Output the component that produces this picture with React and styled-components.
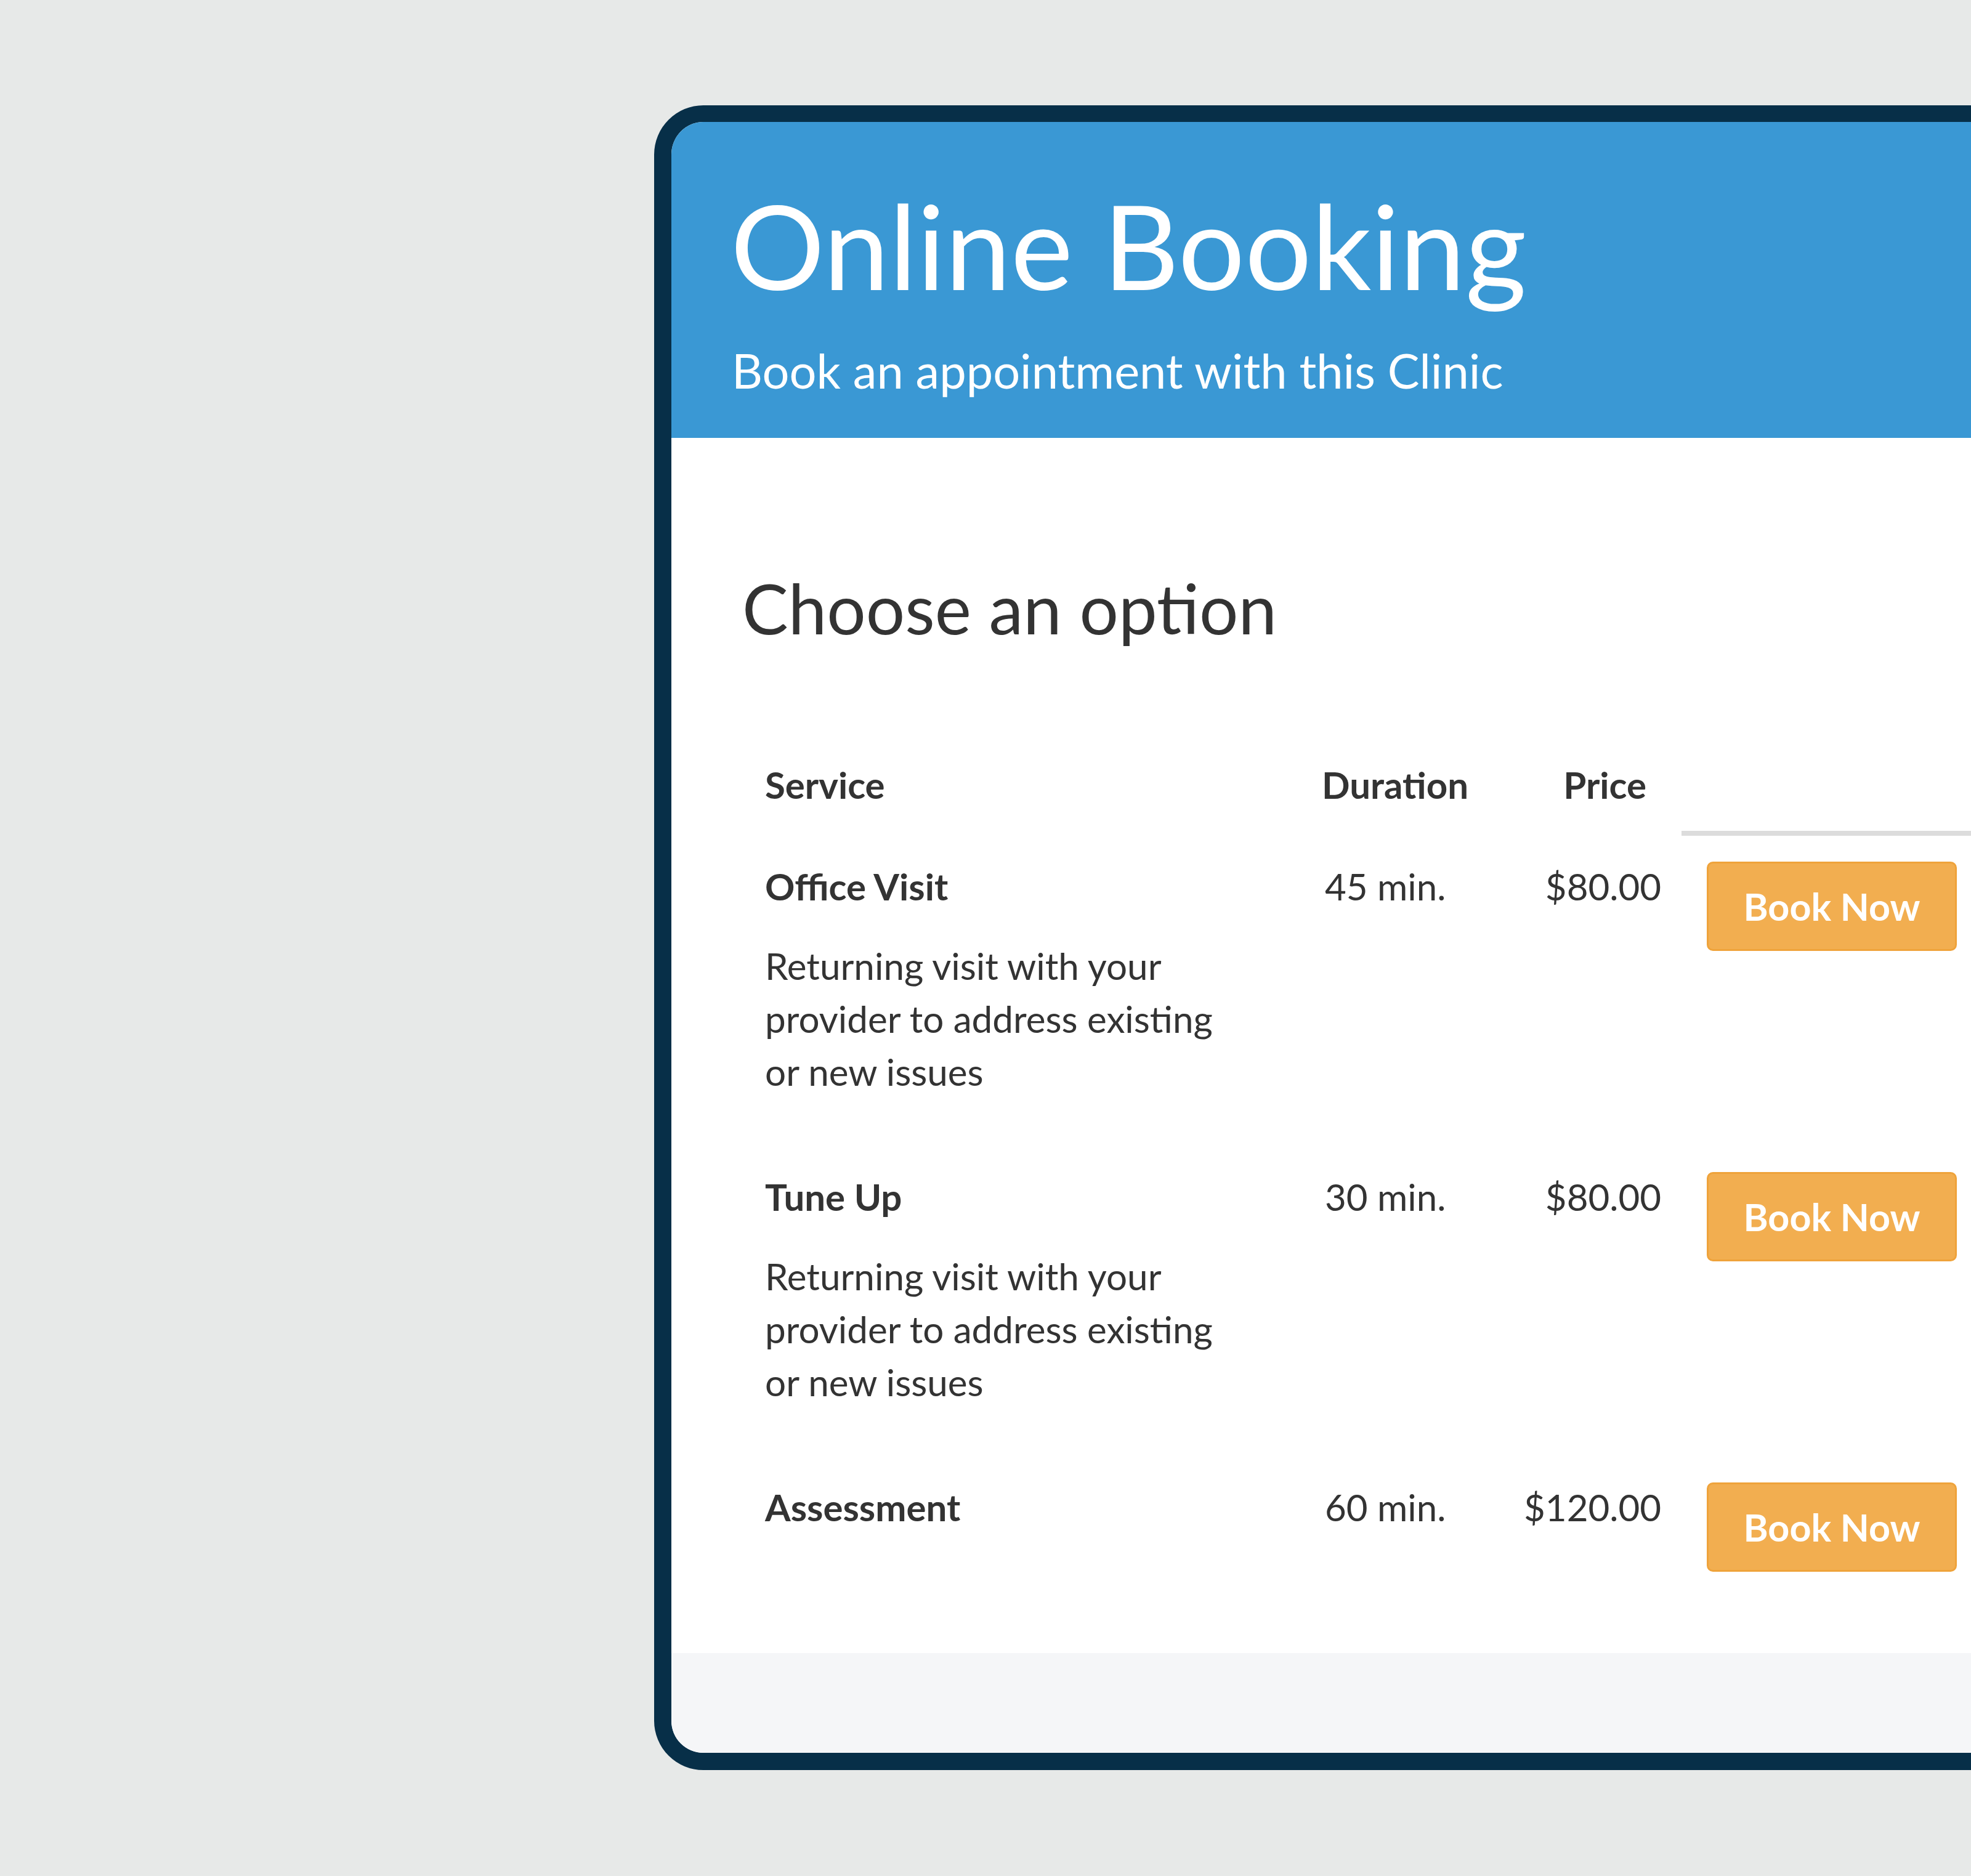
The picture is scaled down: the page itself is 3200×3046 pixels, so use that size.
import styled, { createGlobalStyle } from "styled-components";

const GlobalStyle = createGlobalStyle`
  html, body {
    margin: 0;
    padding: 0;
    background: #e7e9e8;
  }

  body {
    font-family: Lato, "Open Sans", sans-serif;
    color: #333333;
  }
`;

const Pagina = styled.div`
  width: 3200px;
  height: 3046px;
  padding: 171px 0 0 1062px;
  box-sizing: border-box;
  overflow: hidden;
`;

const Aparelho = styled.div`
  width: 2400px;
  border: 28px solid #072f48;
  border-top-width: 27px;
  border-radius: 80px;
  overflow: hidden;
  background: #ffffff;
`;

const Cabecalho = styled.header`
  background: #3a98d4;
  padding: 104px 0 71px 96px;
  color: #ffffff;
`;

const Titulo = styled.h1`
  margin: 0;
  font-size: 191px;
  line-height: 1;
  font-weight: 400;
`;

const Subtitulo = styled.p`
  margin: 69px 0 0 2px;
  font-size: 77.6px;
  line-height: 78px;
  font-weight: 400;
`;

const Corpo = styled.main`
  padding: 220px 0 14px 0;
`;

const TituloSecao = styled.h2`
  margin: 0 0 201px 115px;
  font-size: 112px;
  line-height: 1;
  font-weight: 400;
  color: #333333;
`;

const Tabela = styled.div`
  margin-left: 152px;
  display: flex;
  flex-direction: column;
`;

const Linha = styled.div`
  display: grid;
  grid-template-columns: 904px 325px 259px 1fr;
  padding-bottom: ${(p) => (p.$ultima || p.$cabecalho ? "0" : "120px")};
  margin-bottom: ${(p) => (p.$cabecalho ? "42px" : "0")};
`;

const CelulaCabecalho = styled.div`
  font-size: 60px;
  line-height: 1;
  font-weight: 700;
  padding-bottom: 45px;
  text-align: ${(p) => p.$alinhar || "left"};
  padding-right: ${(p) => p.$recuo || "0"};
  border-bottom: 8px solid ${(p) => (p.$linha ? "#dcdcdc" : "transparent")};
`;

const Celula = styled.div`
  font-size: 60px;
  line-height: 80px;
  text-align: ${(p) => p.$alinhar || "left"};
  padding-left: ${(p) => p.$avanco || "0"};
  padding-right: ${(p) => p.$recuo || "0"};
`;

const NomeServico = styled.div`
  font-size: 60px;
  line-height: 80px;
  font-weight: 700;
`;

const Descricao = styled.p`
  margin: 46px 0 0;
  width: 760px;
  font-size: 60.2px;
  line-height: 86px;
`;

const BotaoReserva = styled.button`
  margin-left: 41px;
  width: 406px;
  height: 145px;
  background: #f2ae50;
  border: 3px solid #efa33b;
  border-radius: 10px;
  color: #ffffff;
  font-family: Lato, "Open Sans", sans-serif;
  font-size: 61px;
  font-weight: 700;
  cursor: pointer;
  padding: 0;
`;

const Espaco = styled.div`
  height: 118px;
`;

const Rodape = styled.footer`
  height: 162px;
  background: #f5f6f8;
`;

const servicos = [
  {
    nome: "Office Visit",
    duracao: "45 min.",
    preco: "$80.00",
    descricao:
      "Returning visit with your provider to address existing or new issues",
  },
  {
    nome: "Tune Up",
    duracao: "30 min.",
    preco: "$80.00",
    descricao:
      "Returning visit with your provider to address existing or new issues",
  },
  { nome: "Assessment", duracao: "60 min.", preco: "$120.00" },
];

export default function App() {
  return (
    <>
      <GlobalStyle />
      <Pagina>
        <Aparelho>
          <Cabecalho>
            <Titulo>Online Booking</Titulo>
            <Subtitulo>Book an appointment with this Clinic</Subtitulo>
          </Cabecalho>
          <Corpo>
            <TituloSecao>Choose an option</TituloSecao>
            <Tabela>
              <Linha $cabecalho>
                <CelulaCabecalho>Service</CelulaCabecalho>
                <CelulaCabecalho>Duration</CelulaCabecalho>
                <CelulaCabecalho $alinhar="right" $recuo="57px">
                  Price
                </CelulaCabecalho>
                <CelulaCabecalho $linha />
              </Linha>
              {servicos.map((s, i) => (
                <Linha key={i} $ultima={i === servicos.length - 1}>
                  <div>
                    <NomeServico>{s.nome}</NomeServico>
                    {s.descricao && <Descricao>{s.descricao}</Descricao>}
                  </div>
                  <Celula $avanco="5px">{s.duracao}</Celula>
                  <Celula $alinhar="right" $recuo="33px">
                    {s.preco}
                  </Celula>
                  <div>
                    <BotaoReserva>Book Now</BotaoReserva>
                  </div>
                </Linha>
              ))}
            </Tabela>
            <Espaco />
          </Corpo>
          <Rodape />
        </Aparelho>
      </Pagina>
    </>
  );
}
